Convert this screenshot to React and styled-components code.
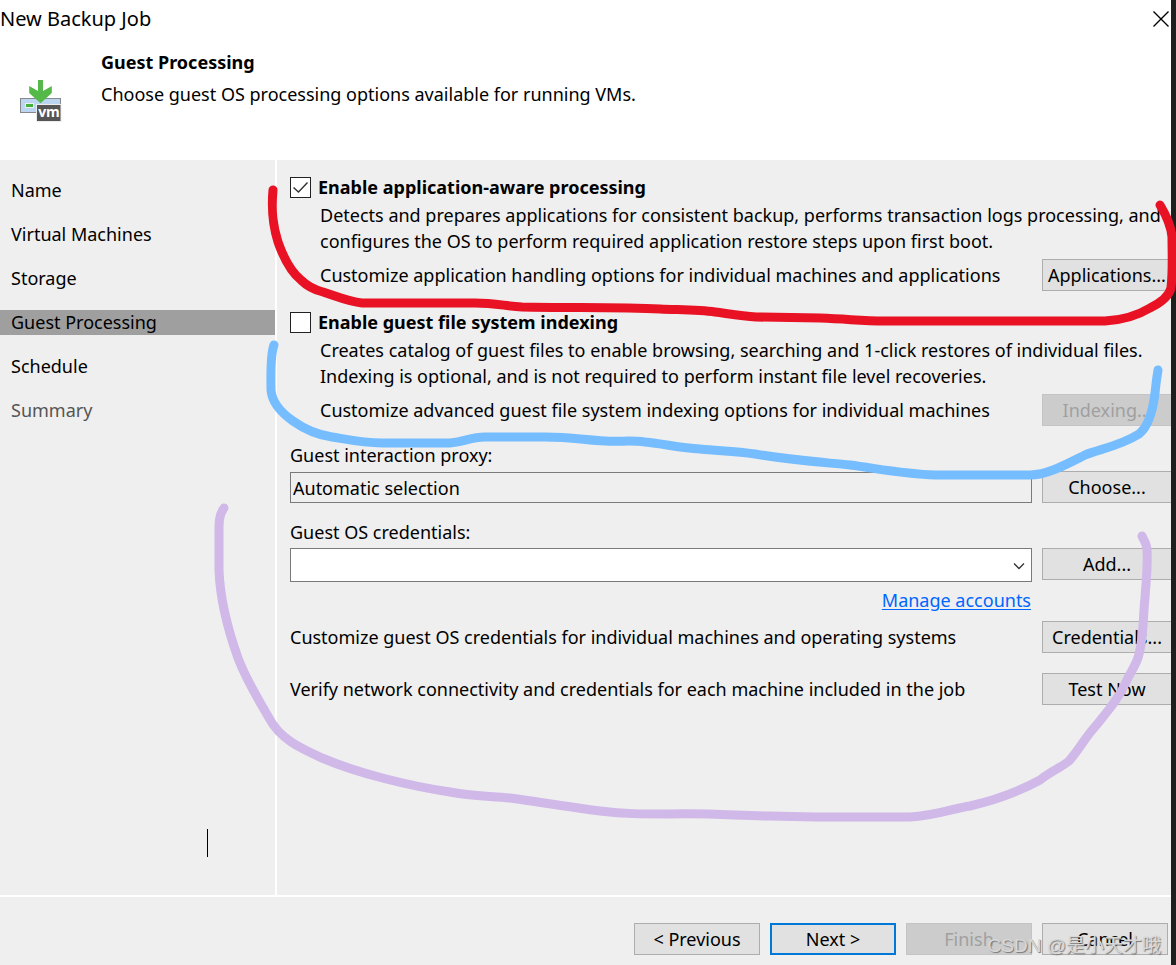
import React, { useState } from 'react'
import styled, { createGlobalStyle } from 'styled-components'

const GlobalStyle = createGlobalStyle`
   * {
      box-sizing: border-box;
   }
   body {
      margin: 0;
      background: #1f1f1d;
      color: #000000;
      font-family: 'Noto Sans', 'Open Sans', 'Noto Sans CJK SC', sans-serif;
      font-size: 18px;
      line-height: 26px;
   }
   h1, h2, p, ul {
      margin: 0;
      padding: 0;
      font-size: inherit;
   }
   button, input, select {
      font: inherit;
      color: inherit;
   }
`

const steps = [
   { id: 1, title: 'Name' },
   { id: 2, title: 'Virtual Machines' },
   { id: 3, title: 'Storage' },
   { id: 4, title: 'Guest Processing', active: true },
   { id: 5, title: 'Schedule' },
   { id: 6, title: 'Summary', muted: true },
]

const strokes = [
   {
      id: 'red',
      color: '#e81224',
      d: 'M273 190 C271 212 273 226 278 242 C284 259 291 272 301 280 C308 287 315 290 323 292 C338 297 350 302 362 303 L475 303 C495 303 505 306 522 307 C570 308 620 307 660 309 C685 310 700 310 715 312 C730 314 742 316 756 317 L820 318 C850 319 860 321 885 321 L1105 321 C1125 320 1140 314 1150 308 C1160 303 1169 297 1171 288 C1173 270 1172 255 1172 237 C1171 225 1166 215 1160 205',
   },
   {
      id: 'blue',
      color: '#75bdff',
      d: 'M274 345 C270 355 271 375 271 390 C272 404 283 414 293 421 C307 431 318 435 332 437 C350 440 364 443 382 443 L450 443 C465 442 470 437 485 437 L545 437 C570 437 585 440 605 441 C620 442 630 440 645 442 C665 444 680 448 700 449 C720 451 735 451 755 454 C790 460 820 462 850 465 C880 469 905 474 935 475 L1030 475 C1047 475 1065 465 1085 455 C1100 449 1120 446 1139 434 C1149 426 1153 410 1155 393 C1156 383 1157 376 1158 370',
   },
   {
      id: 'purple',
      color: '#d0b8e8',
      d: 'M224 508 C219 515 219 522 219 532 L219 570 C220 600 228 630 238 658 C247 682 259 700 269 718 C280 739 300 748 322 758 C360 774 410 786 450 792 C470 796 490 796 510 798 C540 802 575 808 600 811 C625 814 640 814 670 814 C715 813 740 816 770 816 L815 817 L910 817 C935 816 955 808 970 806 C1000 799 1020 791 1040 780 C1050 772 1060 768 1069 761 C1080 748 1085 738 1094 728 C1106 713 1118 700 1125 684 C1131 671 1137 664 1139 654 C1144 635 1143 615 1145 598 C1146 580 1148 570 1147 550 C1147 544 1144 541 1142 536',
   },
]

const BackupIcon = () => (
   <svg width="42" height="42" viewBox="0 0 42 42" aria-hidden="true">
      <rect x="0.5" y="18.5" width="40" height="14" fill="#bcd6f2" stroke="#85888c" />
      <rect x="5" y="23" width="9" height="5" fill="#e6f3e6" />
      <rect x="6" y="24" width="7" height="3" fill="#45b03d" />
      <path
         d="M18 0h5v11l8.800 -5v7l-11.300 10.300l-11.300 -10.300v-7l8.800 5z"
         fill="#54b948"
      />
      <rect x="16.500" y="24.500" width="24.500" height="17" fill="#555555" stroke="#ececec" />
      <text
         x="29"
         y="37"
         textAnchor="middle"
         fontFamily="Open Sans, sans-serif"
         fontWeight="700"
         fontSize="14"
         fill="#ffffff"
      >
         vm
      </text>
   </svg>
)

const CheckOption = ({ id, label, defaultChecked }) => {
   const [checked, setChecked] = useState(defaultChecked)

   return (
      <OptionTitle>
         <CheckWrap>
            <CheckInput
               id={id}
               type="checkbox"
               checked={checked}
               onChange={(e) => setChecked(e.target.checked)}
            />
            {checked && (
               <CheckMark viewBox="0 0 21 21" aria-hidden="true">
                  <path d="M3.500 10.500l5 4.500l9-9.500" />
               </CheckMark>
            )}
         </CheckWrap>
         <label htmlFor={id}>{label}</label>
      </OptionTitle>
   )
}

const App = () => {
   return (
      <>
         <GlobalStyle />
         <Screen>
            <Dialog>
               <Header>
                  <TitleBar>
                     <h1>New Backup Job</h1>
                     <CloseButton type="button" aria-label="Close">
                        <svg width="16" height="16" viewBox="0 0 16 16">
                           <path d="M0.500 0.500l15 15M15.500 0.500l-15 15" stroke="#000000" strokeWidth="1.400" />
                        </svg>
                     </CloseButton>
                  </TitleBar>
                  <Intro>
                     <BackupIcon />
                     <IntroText>
                        <h2>Guest Processing</h2>
                        <p>Choose guest OS processing options available for running VMs.</p>
                     </IntroText>
                  </Intro>
               </Header>

               <Content>
                  <Steps>
                     {steps.map((step) => (
                        <Step key={step.id} $active={step.active} $muted={step.muted}>
                           {step.title}
                        </Step>
                     ))}
                  </Steps>

                  <Main>
                     <Options>
                        <section>
                           <CheckOption
                              id="aware"
                              label="Enable application-aware processing"
                              defaultChecked
                           />
                           <Description>
                              Detects and prepares applications for consistent backup, performs
                              transaction logs processing, and
                              <br />
                              configures the OS to perform required application restore steps
                              upon first boot.
                           </Description>
                           <ActionRow>
                              <RowText $indent>
                                 Customize application handling options for individual machines
                                 and applications
                              </RowText>
                              <SideButton type="button">Applications...</SideButton>
                           </ActionRow>
                        </section>

                        <section>
                           <CheckOption
                              id="indexing"
                              label="Enable guest file system indexing"
                              defaultChecked={false}
                           />
                           <Description>
                              Creates catalog of guest files to enable browsing, searching and
                              1-click restores of individual files.
                              <br />
                              Indexing is optional, and is not required to perform instant file
                              level recoveries.
                           </Description>
                           <ActionRow>
                              <RowText $indent>
                                 Customize advanced guest file system indexing options for
                                 individual machines
                              </RowText>
                              <SideButton type="button" disabled>
                                 Indexing...
                              </SideButton>
                           </ActionRow>
                        </section>
                     </Options>

                     <Field>
                        <label htmlFor="proxy">Guest interaction proxy:</label>
                        <ActionRow $align="end">
                           <TextBox id="proxy" readOnly value="Automatic selection" />
                           <SideButton type="button">Choose...</SideButton>
                        </ActionRow>
                     </Field>

                     <Field>
                        <label htmlFor="credentials">Guest OS credentials:</label>
                        <ActionRow $align="start">
                           <SelectWrap>
                              <Select id="credentials" defaultValue="">
                                 <option value="" />
                              </Select>
                              <Chevron viewBox="0 0 12 8" aria-hidden="true">
                                 <path d="M1 1.500l5 5l5-5" />
                              </Chevron>
                           </SelectWrap>
                           <SideButton type="button">Add...</SideButton>
                           <ManageLink href="#accounts">Manage accounts</ManageLink>
                        </ActionRow>
                     </Field>

                     <Checks>
                        <ActionRow>
                           <RowText>
                              Customize guest OS credentials for individual machines and
                              operating systems
                           </RowText>
                           <SideButton type="button">Credentials...</SideButton>
                        </ActionRow>
                        <ActionRow>
                           <RowText>
                              Verify network connectivity and credentials for each machine
                              included in the job
                           </RowText>
                           <SideButton type="button">Test Now</SideButton>
                        </ActionRow>
                     </Checks>
                  </Main>
               </Content>

               <Footer>
                  <Button type="button">&lt; Previous</Button>
                  <Button type="button" $primary>
                     Next &gt;
                  </Button>
                  <Button type="button" disabled>
                     Finish
                  </Button>
                  <Button type="button">Cancel</Button>
               </Footer>
            </Dialog>

            <Ink width="1176" height="965" viewBox="0 0 1176 965" aria-hidden="true">
               {strokes.map((stroke) => (
                  <path key={stroke.id} d={stroke.d} stroke={stroke.color} />
               ))}
               <rect x="207" y="829" width="1" height="28" fill="#000000" />
            </Ink>
            <Watermark>CSDN @是小天才哦</Watermark>
         </Screen>
      </>
   )
}

const Screen = styled.div`
   position: relative;
   min-height: 100vh;
   padding-right: 5px;
   display: flex;
   overflow: hidden;
`

const Dialog = styled.div`
   flex: 1;
   display: flex;
   flex-direction: column;
   background: #efefef;
`

const Header = styled.header`
   background: #ffffff;
   padding-bottom: 38px;
`

const TitleBar = styled.div`
   display: flex;
   justify-content: space-between;
   align-items: center;
   height: 38px;
   padding: 0 2px 0 0;

   h1 {
      font-size: 20px;
      font-weight: 400;
   }
`

const CloseButton = styled.button`
   display: flex;
   padding: 0;
   border: none;
   background: none;
`

const Intro = styled.div`
   display: flex;
   align-items: flex-end;
   gap: 39px;
   padding: 11px 20px 0;
`

const IntroText = styled.div`
   display: flex;
   flex-direction: column;
   gap: 6px;
   padding-bottom: 15px;
`

const Content = styled.div`
   flex: 1;
   display: flex;
`

const Steps = styled.ul`
   width: 277px;
   padding-top: 18px;
   border-right: 2px solid #ffffff;
   display: flex;
   flex-direction: column;
   gap: 19px;
   list-style: none;
`

const Step = styled.li`
   padding-left: 11px;
   line-height: 25px;
   color: ${({ $muted }) => ($muted ? '#555555' : '#000000')};
   background: ${({ $active }) => ($active ? '#9f9f9f' : 'transparent')};
`

const Main = styled.main`
   flex: 1;
   padding: 14px 0 24px 13px;
`

const Options = styled.div`
   display: flex;
   flex-direction: column;
   gap: 18px;
   margin-bottom: 16px;
`

const OptionTitle = styled.div`
   display: flex;
   align-items: center;
   gap: 7px;
   font-weight: 700;
`

const CheckWrap = styled.span`
   position: relative;
   display: flex;
`

const CheckInput = styled.input`
   appearance: none;
   width: 21px;
   height: 21px;
   margin: 0;
   border: 1px solid #222222;
   background: #ffffff;
`

const CheckMark = styled.svg`
   position: absolute;
   inset: 0;
   fill: none;
   stroke: #333333;
   stroke-width: 1.4;
   pointer-events: none;
`

const Description = styled.p`
   padding: 2px 0 5px 30px;
   white-space: nowrap;
`

const ActionRow = styled.div`
   display: grid;
   grid-template-columns: 1fr 129px;
   column-gap: 10px;
   align-items: ${({ $align }) => $align || 'center'};
`

const RowText = styled.p`
   padding-left: ${({ $indent }) => ($indent ? '30px' : '0')};
   white-space: nowrap;
`

const Button = styled.button`
   width: 126px;
   height: 32px;
   padding: 0;
   line-height: 28px;
   border: ${({ $primary }) => ($primary ? '2px solid #0078d7' : '1px solid #adadad')};
   background: #e1e1e1;

   &:disabled {
      border-color: #c4c4c4;
      background: #cccccc;
      color: #a0a0a0;
   }
`

const SideButton = styled(Button)`
   width: 100%;
   border-right: none;
`

const Field = styled.div`
   display: flex;
   flex-direction: column;
   gap: 3px;
   margin-bottom: 16px;
`

const TextBox = styled.input`
   width: 100%;
   height: 31px;
   padding: 0 2px;
   border: 1px solid #7a7a7a;
   background: #efefef;
`

const SelectWrap = styled.div`
   position: relative;
`

const Select = styled.select`
   display: block;
   appearance: none;
   width: 100%;
   height: 34px;
   border: 1px solid #7a7a7a;
   border-radius: 0;
   background: #ffffff;
`

const Chevron = styled.svg`
   position: absolute;
   top: 14px;
   right: 7px;
   width: 12px;
   height: 8px;
   fill: none;
   stroke: #333333;
   stroke-width: 1.3;
   pointer-events: none;
`

const ManageLink = styled.a`
   justify-self: end;
   padding: 5px 1px 0 0;
   color: #0066ff;
   text-underline-offset: 2px;
`

const Checks = styled.div`
   display: flex;
   flex-direction: column;
   gap: 20px;
   margin-top: -8px;
`

const Footer = styled.footer`
   display: flex;
   justify-content: flex-end;
   gap: 10px;
   padding: 26px 3px 10px;
   border-top: 2px solid #ffffff;
`

const Ink = styled.svg`
   position: absolute;
   top: 0;
   left: 0;
   fill: none;
   stroke-width: 9;
   stroke-linecap: round;
   stroke-linejoin: round;
   pointer-events: none;
`

const Watermark = styled.span`
   position: absolute;
   right: 15px;
   bottom: 6px;
   font-family: 'Liberation Sans', 'Noto Sans CJK SC', sans-serif;
   font-size: 19px;
   color: #d8d8d8;
   text-shadow: 1px 1px 1px #777777;
   pointer-events: none;
`

export default App
